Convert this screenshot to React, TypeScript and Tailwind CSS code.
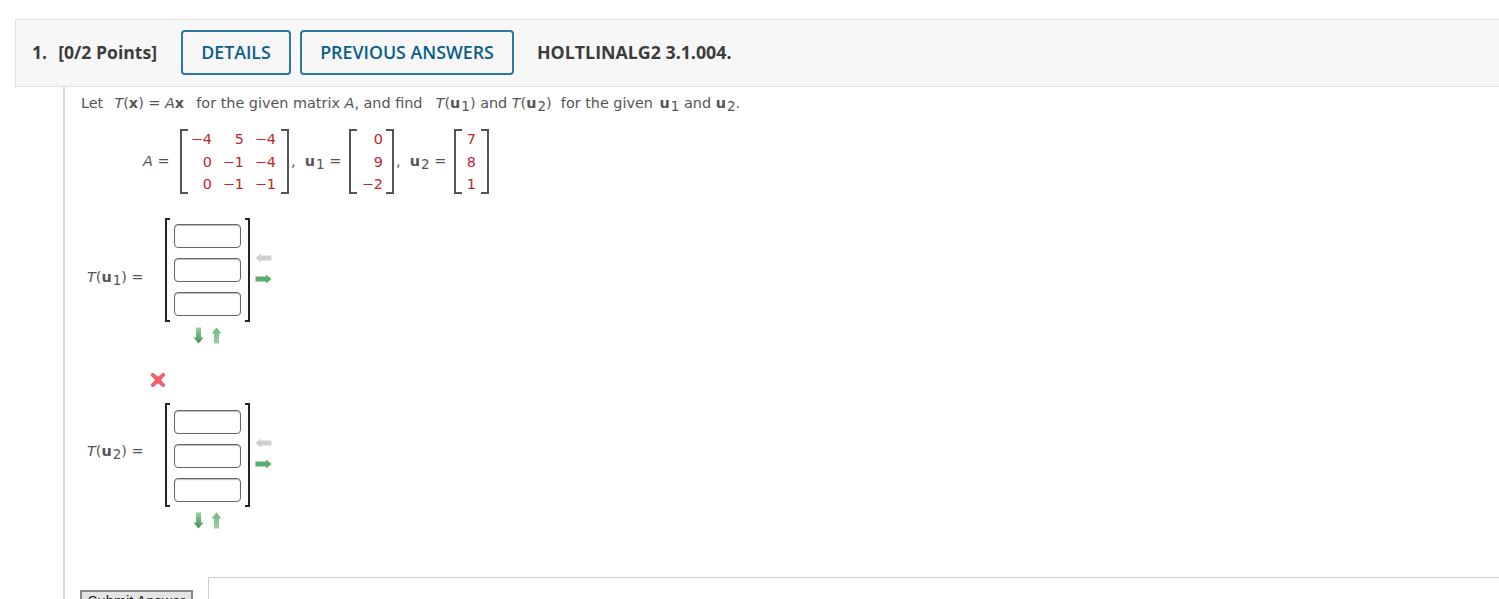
const sans = "font-['Open_Sans',sans-serif]";

function Bold({ c, sub }: { c: string; sub?: string }) {
  return (
    <span>
      <b className="font-bold">{c}</b>
      {sub && <span className="text-[13.5px] relative top-[3px] ml-[1px]">{sub}</span>}
    </span>
  );
}

function Matrix({ rows, cols, cls }: { rows: string[][]; cols: string; cls: string }) {
  return (
    <div className={`flex items-stretch h-[65px] ${cls}`}>
      <div className="w-[8px] border-2 border-r-0 border-[#555]" />
      <div className={`flex-1 grid ${cols} content-between text-[#c0262d] text-[14.4px] leading-[20px]`}>
        {rows.flat().map((v, i) => (
          <span key={i} className="text-right h-[20px]">{v}</span>
        ))}
      </div>
      <div className="w-[8px] border-2 border-l-0 border-[#555]" />
    </div>
  );
}

function HArrow({ dir, color }: { dir: "l" | "r"; color: string }) {
  return (
    <svg width="17" height="10" viewBox="0 0 17 10" className="block">
      <path
        d={dir === "l" ? "M0.5 5 L6 0.5 V2.5 H16.5 V7.5 H6 V9.5 Z" : "M16.5 5 L11 0.5 V2.5 H0.5 V7.5 H11 V9.5 Z"}
        fill={color}
      />
    </svg>
  );
}

function VArrow({ dir }: { dir: "u" | "d" }) {
  return (
    <svg width="11" height="17" viewBox="0 0 11 17" className="block">
      <defs>
        <linearGradient id={`g${dir}`} x1="0" y1="0" x2="0" y2="1">
          <stop offset="0" stopColor={dir === "d" ? "#9ccfa4" : "#6fb87c"} />
          <stop offset="1" stopColor={dir === "d" ? "#3f9150" : "#9ccfa4"} />
        </linearGradient>
      </defs>
      <path
        d={dir === "d" ? "M3 0.5 H8 V10.5 H10.5 L5.5 16.5 L0.5 10.5 H3 Z" : "M5.5 0.5 L10.5 6.5 H8 V16.5 H3 V6.5 H0.5 Z"}
        fill={`url(#g${dir})`}
      />
    </svg>
  );
}

function Answer({ sub, labelPt, inputPt }: { sub: string; labelPt: string; inputPt: string }) {
  return (
    <div className="flex items-start">
      <div className={`w-[84px] pl-[6px] ${labelPt} leading-[22px] text-[14.4px] shrink-0 whitespace-nowrap`}>
        <i>T</i>(<Bold c="u" sub={sub} />) =
      </div>
      <div className="flex flex-col">
        <div className="flex h-[104px] w-[85px]">
          <div className="w-[5px] border-2 border-r-0 border-[#222]" />
          <div className={`flex-1 flex flex-col gap-[10px] ${inputPt} px-[4px]`}>
            <div className="h-[24px] border border-[#666] rounded-[4px] bg-white shadow-[inset_0_1px_1px_#bbb]" />
            <div className="h-[24px] border border-[#666] rounded-[4px] bg-white shadow-[inset_0_1px_1px_#bbb]" />
            <div className="h-[24px] border border-[#666] rounded-[4px] bg-white shadow-[inset_0_1px_1px_#bbb]" />
          </div>
          <div className="w-[5px] border-2 border-l-0 border-[#222]" />
        </div>
        <div className="flex justify-center gap-[7px] mt-[5px]">
          <VArrow dir="d" />
          <VArrow dir="u" />
        </div>
      </div>
      <div className="flex flex-col gap-[11px] pt-[35px] pl-[5px]">
        <HArrow dir="l" color="#cfcfcf" />
        <HArrow dir="r" color="#5cae6c" />
      </div>
    </div>
  );
}

export default function App() {
  return (
    <div className="h-[599px] w-[1499px] overflow-hidden bg-white pt-[19px] font-['DejaVu_Sans',sans-serif] text-[14.4px] text-[#555]">
      <div className={`ml-[15px] h-[68px] flex items-center bg-[#f7f7f7] border border-[#e2e2e2] border-r-0 pl-[16px] pb-[1px] text-[17.8px] ${sans}`}>
        <span className="w-[127px] font-bold text-[#3c3c3c] whitespace-pre text-[17.6px]">1.  <span className="ml-[2px]">[0/2 Points]</span></span>
        <button className="ml-[22px] w-[110px] h-[45px] border-2 border-[#2a78a8] rounded-[4px] text-[#0b5e8a] font-semibold">DETAILS</button>
        <button className="ml-[9px] w-[214px] h-[45px] border-2 border-[#2a78a8] rounded-[4px] text-[#0b5e8a] font-semibold">PREVIOUS ANSWERS</button>
        <span className="ml-[23px] font-bold text-[#3c3c3c]">HOLTLINALG2 3.1.004.</span>
      </div>
      <div className="ml-[63px] h-[512px] border-l-2 border-[#d8d8d8] pl-[16px]">
        <p className="h-[32px] leading-[32px] whitespace-pre">
          Let  <i className="ml-[2px]">T</i>(<b>x</b>) = <i>A</i><b>x</b>  <span className="ml-[3px]">for the given matrix <i>A</i>, and find</span>  <i className="ml-[4px]">T</i>(<Bold c="u" sub="1" />) and <i>T</i>(<Bold c="u" sub="2" />)  for the given <span className="ml-[2px]" /><Bold c="u" sub="1" /> and <Bold c="u" sub="2" />.
        </p>
        <div className="flex items-center h-[65px] mt-[10px] pl-[62px] whitespace-pre">
          <span className="w-[37px]"><i>A</i> =</span>
          <Matrix cls="w-[109px]" cols="grid-cols-[24px_32px_32px]"
            rows={[["−4", "5", "−4"], ["0", "−1", "−4"], ["0", "−1", "−1"]]} />
          <span className="w-[60px] pl-[2px]">,  <Bold c="u" sub="1" /> =</span>
          <Matrix cls="w-[45px]" cols="grid-cols-[1fr] pr-[3px]" rows={[["0"], ["9"], ["−2"]]} />
          <span className="w-[60px] pl-[2px]">,  <Bold c="u" sub="2" /> =</span>
          <Matrix cls="w-[35px]" cols="grid-cols-[1fr] pr-[5px]" rows={[["7"], ["8"], ["1"]]} />
        </div>
        <div className="mt-[24px]">
          <Answer sub="1" labelPt="pt-[48px]" inputPt="pt-[6px]" />
        </div>
        <div className="mt-[28px] ml-[69px] h-[14px] flex">
          <svg width="16" height="16" viewBox="0 0 16 16">
            <path d="M2.5 0.5 L8 4.5 L13.5 0.5 L15.5 3 L11 8 L15.5 13 L13.5 15.5 L8 11.5 L2.5 15.5 L0.5 13 L5 8 L0.5 3 Z" fill="#f0606a" />
          </svg>
        </div>
        <div className="mt-[17px]">
          <Answer sub="2" labelPt="pt-[37px]" inputPt="pt-[7px]" />
        </div>
        <div className="flex items-start mt-[48px] -ml-[1px]">
          <button className="mt-[13px] w-[113px] h-[24px] border-2 border-[#888] bg-[#e4e4e4] text-[#222] text-[14.6px] leading-[16px] pb-[3px] whitespace-nowrap font-['Liberation_Sans',sans-serif]">Submit Answer</button>
          <div className="ml-[15px] flex-1 h-[40px] border border-[#ccc] border-r-0" />
        </div>
      </div>
    </div>
  );
}
